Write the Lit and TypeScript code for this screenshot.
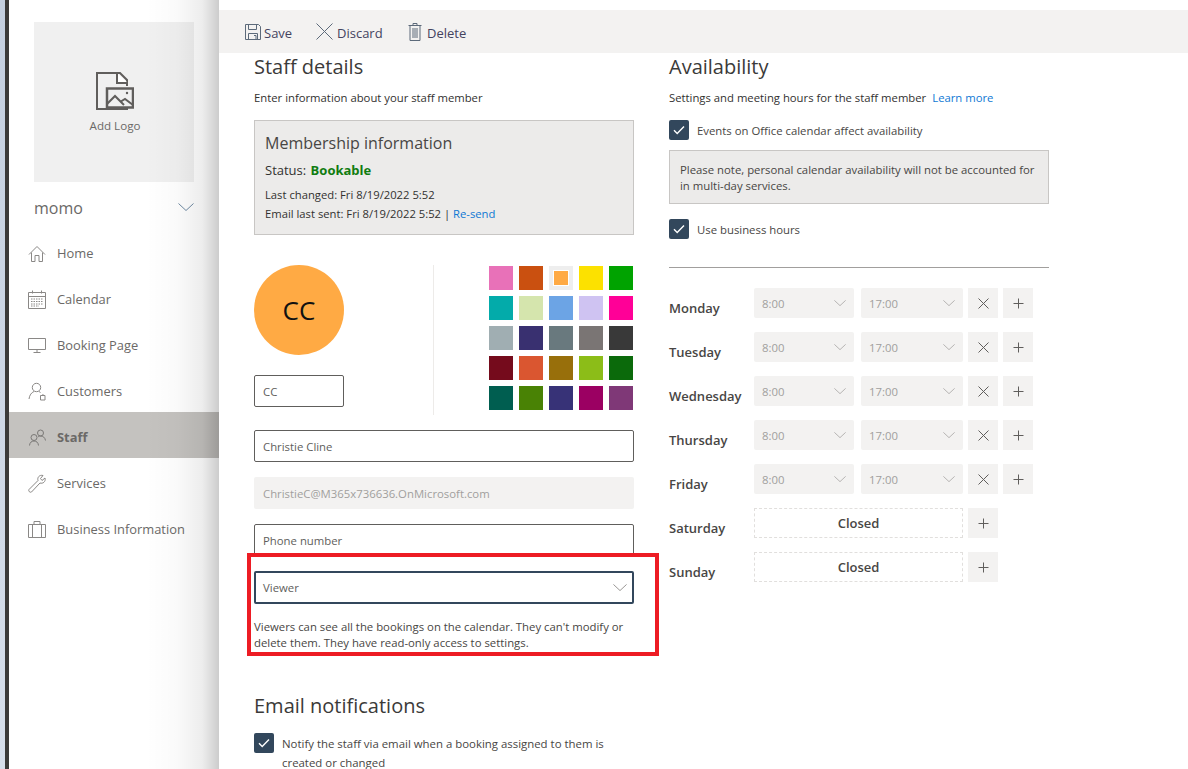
import { LitElement, html, css, svg } from "lit";
import { customElement } from "lit/decorators.js";

const chev = (w = 16, h = 8) => html`<svg class="chev" width=${w} height=${h} viewBox="0 0 16 8"><path d="M.5.5 8 7.5 15.5.5" fill="none" stroke="currentColor" stroke-width="1"/></svg>`;
const check = html`<span class="cb"><svg width="12" height="10" viewBox="0 0 12 10"><path d="M1 5.2 4.2 8.4 11 1.4" fill="none" stroke="#fff" stroke-width="1.4"/></svg></span>`;

const navIcons: Record<string, unknown> = {
  Home: svg`<path d="M1 10.5 9 2.500l8 8M3.500 8.500V17.500h3.500v-6h4v6h3.500V8.500" fill="none" stroke="currentColor"/>`,
  Calendar: svg`<path d="M.5 2.500h17v16H.5zM.5 6.500h17M4.500.5v3M13.500.5v3" fill="none" stroke="currentColor"/><path d="M3 9h12M3 11.500h12M3 14h12M3 16h8" stroke="currentColor" stroke-dasharray="1.500 1"/>`,
  "Booking Page": svg`<path d="M.5 2.500h17v11H.5zM9 13.500v2.500M5.500 16.500h7" fill="none" stroke="currentColor"/>`,
  Customers: svg`<circle cx="8.500" cy="5.500" r="4.200" fill="none" stroke="currentColor"/><path d="M1 17c.5-4 2.500-6.500 5-7.500M11 9.500l1.500 1" fill="none" stroke="currentColor"/><path d="M12.500 13.500h4.500v4.500h-4.500zM13.500 13.500a1.500 1.500 0 0 1 2.500 0" fill="none" stroke="currentColor"/>`,
  Staff: svg`<circle cx="12.500" cy="5" r="3" fill="none" stroke="currentColor"/><circle cx="6" cy="9.500" r="3" fill="none" stroke="currentColor"/><path d="M1.500 17.500c.3-3 2-4.500 4.500-4.500s4.200 1.500 4.500 4.500M10 9c1-1 1.500-1 2.500-1 2.500 0 4.500 1.500 5 4.500" fill="none" stroke="currentColor"/>`,
  Services: svg`<path d="M1 15.500 10 6.500C9 3.500 11.500.5 15 1.500L12.500 4.500l1.500 2 3-2.500c1 3.500-2 6-5 5L3.500 18c-1.500 1-3.500-1-2.500-2.500z" fill="none" stroke="currentColor"/>`,
  "Business Information": svg`<path d="M.5 4.500h17v13H.5zM4.500 4.500v13M13.500 4.500v13M6 4.500v-3h6v3" fill="none" stroke="currentColor"/>`,
};

const swatches = [
  "#e871b8","#ca5010","sel","#fce100","#00a300",
  "#03abaa","#d5e5ad","#6ca4e5","#cfc3f2","#ff0097",
  "#a0aeb2","#393070","#69797e","#7a7574","#393939",
  "#750b1c","#da5630","#986f0b","#8cbd18","#0b6a0b",
  "#005e50","#498205","#373277","#9b0062","#7f3877",
];

const days = ["Monday","Tuesday","Wednesday","Thursday","Friday"];

@customElement("app-root")
export class AppRoot extends LitElement {
  static styles = css`
    :host { display: block; height: 769px; overflow: hidden; background: #fff; color: #323130;
      font-family: "Open Sans", "Noto Sans", sans-serif; font-size: 11.350px; }
    * { box-sizing: border-box; }
    .page { display: flex; height: 769px; position: relative; }
    .strip { width: 5px; background: linear-gradient(#c4cfdf, #d6deea); flex: none; }
    .edge { width: 4px; background: #3b3a39; flex: none; }
    .side { width: 210px; flex: none; position: relative; padding-top: 22px; background: #fff; }
    .side::after { content: ""; position: absolute; inset: 0; pointer-events: none;
      background: linear-gradient(90deg, rgba(0,0,0,0) 65%, rgba(0,0,0,.02) 80%, rgba(0,0,0,.07) 92%, rgba(0,0,0,.2) 100%); }
    .logo { width: 160px; height: 160px; margin-left: 25px; background: #f0f0f0; display: flex; flex-direction: column;
      align-items: center; padding: 50px 0 0 2px; color: #6b6967; font-size: 11.600px; }
    .logo span { margin-top: 6px; line-height: 16px; }
    .tenant { display: flex; justify-content: space-between; align-items: center; height: 48px; padding-top: 4px; margin-left: 25px; width: 160px;
      font-size: 16px; color: #6b6967; }
    .tenant .chev { color: #6f8aa3; margin-bottom: 3px; }
    .nav { display: flex; align-items: center; height: 46px; padding-left: 19px; gap: 11px; font-size: 12.900px; color: #6b6967; }
    .nav svg { flex: none; color: #8a8886; }
    .nav.on { background: #c4c2bf; font-weight: 700; margin: -2px 0 2px; padding-top: 4px; }
    .nav.on svg { color: #7a7876; }
    .main { flex: 1; min-width: 0; padding-top: 10px; }
    .bar { height: 43px; background: #f3f2f1; display: flex; align-items: center; padding-left: 26px; font-size: 13px; color: #44435f; }
    .bar div { display: flex; align-items: center; gap: 4px; }
    .bar span { padding-top: 2px; }
    .bar .save { width: 71px; gap: 3px; }
    .bar .disc { width: 92px; }
    .cols { display: grid; grid-template-columns: 380px 380px; gap: 35px; padding-left: 35px; }
    h2 { margin: 0; font-size: 20px; font-weight: 400; line-height: 28px; color: #3b3a39; }
    .sub { line-height: 16px; margin-top: 9px; font-size: 11.300px; }
    a { color: #0f78d4; text-decoration: none; }
    .learn { margin-left: 6px; }
    .info { margin-top: 14px; height: 115px; background: #ecebea; border: 1px solid #c8c6c4; padding: 9px 10px; font-size: 11.250px; }
    .info h3 { margin: 0; font-size: 16px; font-weight: 400; line-height: 26px; color: #484644; }
    .status { font-size: 13px; line-height: 20px; margin-top: 4px; }
    .status b { color: #107c10; margin-left: 1px; }
    .info p { margin: 0; line-height: 19px; }
    .status + p { margin-top: 5px; }
    .persona { display: flex; margin-top: 30px; height: 150px; }
    .pl { width: 180px; border-right: 1px solid #edebe9; }
    .avatar { width: 90px; height: 90px; border-radius: 50%; background: #ffaa44; display: flex; align-items: center; justify-content: center;
      font-size: 26px; color: #111; }
    .input { display: flex; align-items: center; height: 32px; border: 1px solid #605e5c; border-radius: 2px; padding-left: 8px; color: #605e5c; background: #fff; }
    .initials { width: 90px; margin-top: 20px; }
    .grid { margin: 1px 0 0 55px; display: grid; grid-template-columns: repeat(5, 24px); grid-auto-rows: 24px; gap: 6px; }
    .sw.sel { border: 4px solid #eee; background: #fff; padding: 1px; }
    .sw.sel i { display: block; width: 100%; height: 100%; background: #ffaa44; }
    .name { margin-top: 15px; }
    .email { margin-top: 15px; background: #f3f2f1; border: 0; color: #a19f9d; padding-left: 9px; }
    .phone { margin-top: 15px; }
    .role { margin-top: 15px; height: 33px; border: 2px solid #32475c; justify-content: space-between; padding: 0 5px 0 7px; }
    .role .chev { color: #8a8886; }
    .help { margin-top: 15px; line-height: 16px; color: #484644; }
    .en { margin-top: 41px; }
    .chk { display: flex; gap: 8px; align-items: flex-start; color: #484644; }
    .chk .t { padding-top: 1px; line-height: 19px; }
    .cb { width: 20px; height: 20px; flex: none; border-radius: 2px; background: #32475c; display: flex; align-items: center; justify-content: center; }
    .en + .chk { margin-top: 13px; font-size: 11.420px; }
    .a1 { margin-top: 14px; }
    .note { margin-top: 10px; height: 54px; background: #ecebea; border: 1px solid #c8c6c4; padding: 11px 10px; line-height: 16px; color: #484644; }
    .a2 { margin-top: 15px; }
    hr { border: 0; border-top: 1px solid #a19f9d; margin: 28px 0 20px; }
    .day { display: flex; height: 30px; margin-bottom: 14px; }
    .day label { width: 85px; flex: none; font-size: 13px; font-weight: 600; color: #484644; line-height: 20px; padding-top: 10px; white-space: nowrap; }
    .dd { height: 30px; background: #f3f2f1; border-radius: 2px; display: flex; align-items: center; justify-content: space-between;
      padding: 0 8px; color: #a19f9d; }
    .dd .chev { color: #a19f9d; }
    .from { width: 100px; }
    .to { width: 102px; margin-left: 7px; }
    .btn { width: 30px; height: 30px; background: #f3f2f1; display: flex; align-items: center; justify-content: center; margin-left: 5px; color: #605e5c; flex: none; }
    .closed { width: 209px; height: 30px; border: 1px dashed #e1dfdd; display: flex; align-items: center; justify-content: center; font-size: 13px; font-weight: 600; color: #484644; }
    .redbox { position: absolute; left: 247px; top: 553px; width: 412px; height: 103px; border: 4px solid #ed1c24; pointer-events: none; }
  `;

  private x = html`<svg width="11" height="11" viewBox="0 0 11 11"><path d="M.5.5l10 10M10.500.5l-10 10" stroke="currentColor" fill="none"/></svg>`;
  private plus = html`<svg width="11" height="11" viewBox="0 0 11 11"><path d="M5.500.5v10M.5 5.500h10" stroke="currentColor" fill="none"/></svg>`;

  render() {
    return html`<div class="page">
      <div class="strip"></div><div class="edge"></div>
      <aside class="side">
        <div class="logo">
          <svg width="38" height="40" viewBox="0 0 38 40">
            <path d="M31 14V8L24 1H1v36h31" fill="none" stroke="#605e5c" stroke-width="2"/>
            <path d="M21 1v10h11" fill="#fff" stroke="#605e5c" stroke-width="2"/>
            <path d="M11 16.500h26v19H11z" fill="#f0f0f0" stroke="#605e5c" stroke-width="2.500"/>
            <path d="M11 32l8-8 9 9M24 30l5-3 8 6" fill="none" stroke="#605e5c" stroke-width="2"/>
            <circle cx="31" cy="21" r="1.200" fill="#605e5c"/>
          </svg>
          <span>Add Logo</span>
        </div>
        <div class="tenant"><span>momo</span>${chev()}</div>
        ${Object.keys(navIcons).map(k => html`<div class="nav ${k === "Staff" ? "on" : ""}">
          <svg width="18" height="19" viewBox="0 0 18 19">${navIcons[k]}</svg><span>${k}</span></div>`)}
      </aside>
      <main class="main">
        <div class="bar">
          <div class="save"><svg width="16" height="16" viewBox="0 0 16 16"><path d="M.5.5h13l2 2v13H.5zM3.500.5v5h8v-5M3.500 15.500v-6h9v6M9 11.500h2v4" fill="none" stroke="#5c6a7a"/></svg><span>Save</span></div>
          <div class="disc"><svg width="17" height="17" viewBox="0 0 17 17"><path d="M.5.500l16 16M16.500.500l-16 16" fill="none" stroke="#5c6a7a"/></svg><span>Discard</span></div>
          <div><svg width="15" height="18" viewBox="0 0 15 18"><path d="M.5 2.500h13M2 2.500v15h10v-15M5 2.500V.5h4v2M5 5v10M7 5v10M9 5v10" fill="none" stroke="#5c6a7a"/></svg><span>Delete</span></div>
        </div>
        <div class="cols">
          <section>
            <h2>Staff details</h2>
            <div class="sub">Enter information about your staff member</div>
            <div class="info">
              <h3>Membership information</h3>
              <div class="status">Status: <b>Bookable</b></div>
              <p>Last changed: Fri 8/19/2022 5:52</p>
              <p>Email last sent: Fri 8/19/2022 5:52 | <a>Re-send</a></p>
            </div>
            <div class="persona">
              <div class="pl">
                <div class="avatar">CC</div>
                <div class="input initials">CC</div>
              </div>
              <div class="grid">
                ${swatches.map(c => c === "sel"
                  ? html`<div class="sw sel"><i></i></div>`
                  : html`<div class="sw" style="background:${c}"></div>`)}
              </div>
            </div>
            <div class="input name">Christie Cline</div>
            <div class="input email">ChristieC@M365x736636.OnMicrosoft.com</div>
            <div class="input phone">Phone number</div>
            <div class="input role"><span>Viewer</span>${chev(14, 7)}</div>
            <div class="help">Viewers can see all the bookings on the calendar. They can't modify or delete them. They have read-only access to settings.</div>
            <h2 class="en">Email notifications</h2>
            <div class="chk">${check}<span class="t">Notify the staff via email when a booking assigned to them is created or changed</span></div>
          </section>
          <section>
            <h2>Availability</h2>
            <div class="sub">Settings and meeting hours for the staff member<a class="learn">Learn more</a></div>
            <div class="chk a1">${check}<span class="t">Events on Office calendar affect availability</span></div>
            <div class="note">Please note, personal calendar availability will not be accounted for in multi-day services.</div>
            <div class="chk a2">${check}<span class="t">Use business hours</span></div>
            <hr />
            ${days.map(d => html`<div class="day"><label>${d}</label>
              <div class="dd from"><span>8:00</span>${chev(12, 6)}</div>
              <div class="dd to"><span>17:00</span>${chev(12, 6)}</div>
              <div class="btn">${this.x}</div><div class="btn">${this.plus}</div></div>`)}
            ${["Saturday", "Sunday"].map(d => html`<div class="day"><label>${d}</label>
              <div class="closed">Closed</div><div class="btn">${this.plus}</div></div>`)}
          </section>
        </div>
      </main>
      <div class="redbox"></div>
    </div>`;
  }
}
